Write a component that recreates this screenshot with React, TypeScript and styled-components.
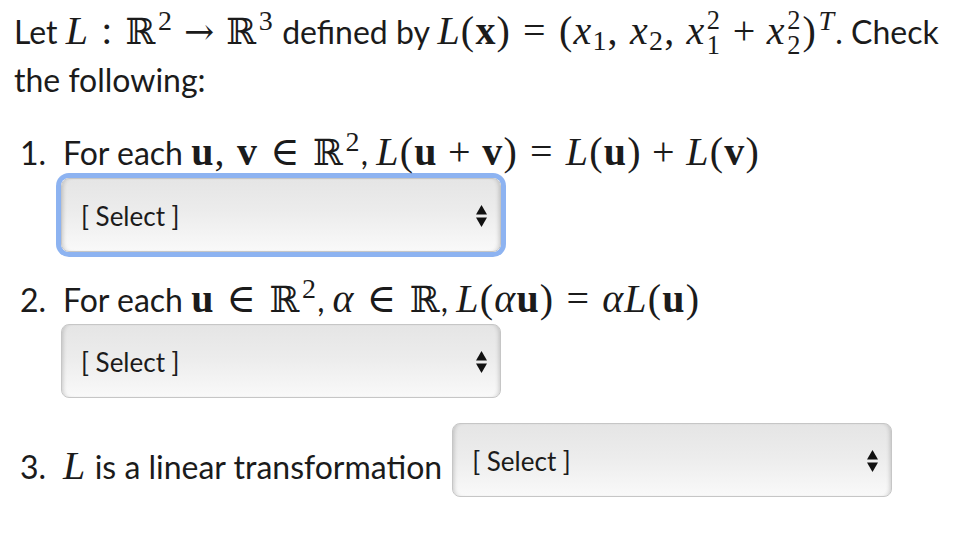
import React from "react";
import styled, { createGlobalStyle, css } from "styled-components";

const GlobalStyle = createGlobalStyle`
  * {
    box-sizing: border-box;
  }
  body {
    margin: 0;
    background: #ffffff;
    color: #1b1b1b;
    font-family: Lato, "Open Sans", sans-serif;
  }
`;

const Page = styled.div`
  padding: 8px 14px;
  font-size: 32px;
  line-height: 48px;
`;

const Intro = styled.p`
  margin: 0 0 25px;
`;

const List = styled.div`
  display: flex;
  flex-direction: column;
`;

const Item = styled.div<{ $gap?: number }>`
  display: grid;
  grid-template-columns: 49px 1fr;
  align-items: baseline;
  margin-bottom: ${(p) => p.$gap ?? 0}px;
`;

const Num = styled.span`
  padding-left: 6px;
`;

const Body = styled.div``;

// math pieces
const M = styled.span`
  font-family: "Liberation Serif", "DejaVu Serif", serif;
  font-size: 1.25em;
  letter-spacing: 0.03em;
  line-height: 1;
  white-space: nowrap;
`;

const I = styled.i`
  font-style: italic;
`;

const B = styled.b`
  font-weight: 700;
`;

const DS = styled.span`
  font-family: "DejaVu Serif", serif;
  font-size: 0.9em;
`;

const Rel = styled.span`
  margin: 0 0.3em;
`;

const Arrow = styled(Rel)`
  font-family: "DejaVu Serif", serif;
  font-size: 0.9em;
`;

const Bin = styled.span`
  margin: 0 0.26em;
`;

const Sup = styled.sup`
  font-size: 0.7em;
  line-height: 0;
  vertical-align: 0.5em;
  margin-left: 0.05em;
`;

const Sub = styled.sub`
  font-size: 0.7em;
  line-height: 0;
  vertical-align: -0.2em;
`;

const Stack = styled.span`
  display: inline-flex;
  flex-direction: column;
  align-items: flex-start;
  font-size: 0.66em;
  line-height: 0.92;
  vertical-align: 0.55em;
  margin: -0.4em 0.04em 0 0.05em;
  height: 1em;
`;

const SupSub = ({ sup, sub }: { sup: string; sub: string }) => (
  <Stack>
    <span>{sup}</span>
    <span>{sub}</span>
  </Stack>
);

const RR = () => <DS>ℝ</DS>;

// select
const Select = styled.div<{ $focus?: boolean; $inline?: boolean }>`
  display: ${(p) => (p.$inline ? "inline-flex" : "flex")};
  align-items: center;
  justify-content: space-between;
  width: 440px;
  height: 74px;
  margin-left: -2px;
  padding: 2px 13px 0 19px;
  border: 1px solid #c6c6c6;
  border-radius: 8px;
  font-size: 26px;
  line-height: 1;
  color: #1b1b1b;
  background: linear-gradient(180deg, #e5e5e5 0%, #ececec 45%, #f9f9f9 100%);
  box-shadow: inset 4px 0 4px -3px rgba(0, 0, 0, 0.18),
    inset -4px 0 4px -3px rgba(0, 0, 0, 0.18);
  ${(p) =>
    p.$focus &&
    css`
      box-shadow: 0 0 0 5px #8db3f1, inset 4px 0 4px -3px rgba(0, 0, 0, 0.18),
        inset -4px 0 4px -3px rgba(0, 0, 0, 0.18);
    `}
  ${(p) =>
    p.$inline &&
    css`
      margin-left: 10px;
      vertical-align: 8px;
    `}
`;

const Arrows = () => (
  <svg width="11" height="22" viewBox="0 0 11 22">
    <path d="M5.5 0 L11 9.5 H0 Z" fill="#111" />
    <path d="M0 12.5 H11 L5.5 22 Z" fill="#111" />
  </svg>
);

const Dropdown = ({ focus, inline }: { focus?: boolean; inline?: boolean }) => (
  <Select $focus={focus} $inline={inline} role="combobox">
    <span>[ Select ]</span>
    <Arrows />
  </Select>
);

const BlockSelect = styled.div<{ $top: number }>`
  margin-top: ${(p) => p.$top}px;
`;

export default function App() {
  return (
    <>
      <GlobalStyle />
      <Page>
        <Intro>
          Let{" "}
          <M>
            <I>L</I>
            <Rel>:</Rel>
            <RR />
            <Sup>2</Sup>
            <Arrow>→</Arrow>
            <RR />
            <Sup>3</Sup>
          </M>{" "}
          defined by{" "}
          <M>
            <I>L</I>(<B>x</B>)<Rel>=</Rel>(<I>x</I>
            <Sub>1</Sub>, <I>x</I>
            <Sub>2</Sub>, <I>x</I>
            <SupSub sup="2" sub="1" />
            <Bin>+</Bin>
            <I>x</I>
            <SupSub sup="2" sub="2" />)
            <Sup>
              <I>T</I>
            </Sup>
          </M>
          . Check
          <br />
          the following:
        </Intro>
        <List>
          <Item $gap={24}>
            <Num>1.</Num>
            <Body>
              For each{" "}
              <M>
                <B>u</B>, <B>v</B>
                <Rel>∈</Rel>
                <RR />
                <Sup>2</Sup>
              </M>
              ,{" "}
              <M>
                <I>L</I>(<B>u</B>
                <Bin>+</Bin>
                <B>v</B>)<Rel>=</Rel>
                <I>L</I>(<B>u</B>)<Bin>+</Bin>
                <I>L</I>(<B>v</B>)
              </M>
              <BlockSelect $top={1}>
                <Dropdown focus />
              </BlockSelect>
            </Body>
          </Item>
          <Item $gap={25}>
            <Num>2.</Num>
            <Body>
              For each{" "}
              <M>
                <B>u</B>
                <Rel>∈</Rel>
                <RR />
                <Sup>2</Sup>
              </M>
              ,{" "}
              <M>
                <I>α</I>
                <Rel>∈</Rel>
                <RR />
              </M>
              ,{" "}
              <M>
                <I>L</I>(<I>α</I>
                <B>u</B>)<Rel>=</Rel>
                <I>α</I>
                <I>L</I>(<B>u</B>)
              </M>
              <BlockSelect $top={0}>
                <Dropdown />
              </BlockSelect>
            </Body>
          </Item>
          <Item>
            <Num>3.</Num>
            <Body>
              <M>
                <I>L</I>
              </M>{" "}
              is a linear transformation
              <Dropdown inline />
            </Body>
          </Item>
        </List>
      </Page>
    </>
  );
}
